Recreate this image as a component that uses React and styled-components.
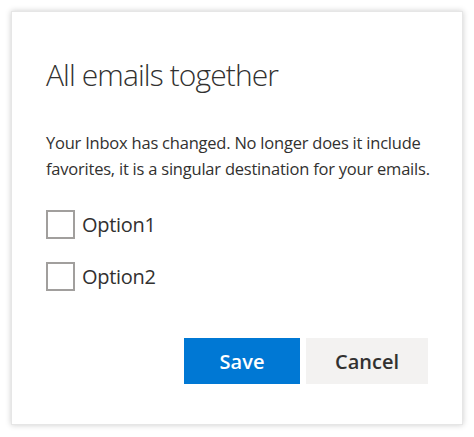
import React, { useState } from 'react'
import styled, { createGlobalStyle } from 'styled-components'

const GlobalStyle = createGlobalStyle`
  html, body {
    margin: 0;
    padding: 0;
    background: #ffffff;
  }
  body {
    font-family: "Open Sans", "Noto Sans", Arial, sans-serif;
    color: #323130;
  }
`

const Page = styled.div`
  padding: 11px;
`

const Card = styled.div`
  width: 452px;
  box-sizing: border-box;
  background: #fff;
  border: 1px solid #e6e6e6;
  box-shadow: 0 0 6px rgba(0, 0, 0, 0.2);
  padding: 43px 34px 40px;
`

const Title = styled.h1`
  margin: 0;
  font-size: 30px;
  line-height: 40px;
  font-weight: 300;
  letter-spacing: -0.9px;
  color: #323130;
`

const Text = styled.p`
  margin: 35px 0 0;
  font-size: 16.5px;
  line-height: 26px;
  letter-spacing: -0.22px;
  color: #323130;
  white-space: nowrap;
`

const Options = styled.div`
  margin-top: 28px;
  display: flex;
  flex-direction: column;
  gap: 23px;
`

const Option = styled.label`
  display: flex;
  align-items: center;
  gap: 7px;
  cursor: pointer;
  font-size: 20px;
  line-height: 29px;
  letter-spacing: -0.3px;
`

const Box = styled.span`
  width: 29px;
  height: 29px;
  box-sizing: border-box;
  border: 2.5px solid ${(p) => (p.checked ? '#0078d4' : '#a19f9d')};
  background: ${(p) => (p.checked ? '#0078d4' : '#fff')};
  display: flex;
  align-items: center;
  justify-content: center;
`

const Actions = styled.div`
  margin-top: 47px;
  display: flex;
  justify-content: flex-end;
  gap: 6px;
`

const Button = styled.button`
  height: 46px;
  width: ${(p) => p.w}px;
  border: none;
  font-family: inherit;
  font-size: 20px;
  font-weight: 600;
  cursor: pointer;
  background: ${(p) => (p.primary ? '#0078d4' : '#f3f2f1')};
  color: ${(p) => (p.primary ? '#ffffff' : '#323130')};
`

function Check({ label }) {
  const [on, setOn] = useState(false)
  return (
    <Option onClick={() => setOn(!on)}>
      <Box checked={on}>
        {on && (
          <svg width="16" height="16" viewBox="0 0 16 16" fill="none">
            <path d="M2.5 8.5l3.5 3.5 7.5-8" stroke="#fff" strokeWidth="2" />
          </svg>
        )}
      </Box>
      {label}
    </Option>
  )
}

export default function App() {
  return (
    <Page>
      <GlobalStyle />
      <Card>
        <Title>All emails together</Title>
        <Text>
          Your Inbox has changed. No longer does it include
          <br />
          favorites, it is a singular destination for your emails.
        </Text>
        <Options>
          <Check label="Option1" />
          <Check label="Option2" />
        </Options>
        <Actions>
          <Button primary w={116}>Save</Button>
          <Button w={122}>Cancel</Button>
        </Actions>
      </Card>
    </Page>
  )
}
